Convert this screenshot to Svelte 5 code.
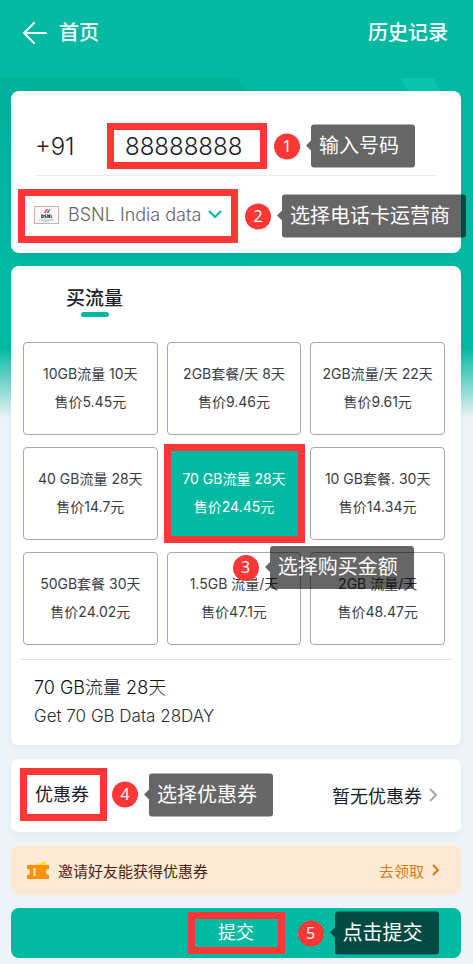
<script lang="ts">
	interface Plan {
		name: string;
		price: string;
		detail: string;
	}

	const plans: Plan[] = [
		{ name: '10GB流量 10天', price: '5.45', detail: 'Get 10 GB Data 10DAY' },
		{ name: '2GB套餐/天 8天', price: '9.46', detail: 'Get 2 GB/Day 8DAY' },
		{ name: '2GB流量/天 22天', price: '9.61', detail: 'Get 2 GB/Day 22DAY' },
		{ name: '40 GB流量 28天', price: '14.7', detail: 'Get 40 GB Data 28DAY' },
		{ name: '70 GB流量 28天', price: '24.45', detail: 'Get 70 GB Data 28DAY' },
		{ name: '10 GB套餐. 30天', price: '14.34', detail: 'Get 10 GB Data 30DAY' },
		{ name: '50GB套餐 30天', price: '24.02', detail: 'Get 50 GB Data 30DAY' },
		{ name: '1.5GB 流量/天', price: '47.1', detail: 'Get 1.5 GB/Day' },
		{ name: '2GB 流量/天', price: '48.47', detail: 'Get 2 GB/Day' }
	];

	let phone = $state('88888888');
	let operator = $state('bsnl');
	let selected = $state(4);
	let plan = $derived(plans[selected]);
</script>

{#snippet step(n: number, text: string)}
	<span class="step step-{n}">
		<span class="badge">{n}</span>
		<span class="tip">{text}</span>
	</span>
{/snippet}

<div class="page">
	<header>
		<a href="#home" class="back">
			<svg width="24" height="22" viewBox="0 0 24 22" fill="none" stroke="currentColor" stroke-width="2" stroke-linecap="round" stroke-linejoin="round" aria-hidden="true">
				<path d="M11 1 1 11l10 10M1 11h22" />
			</svg>
			首页
		</a>
		<a href="#history">历史记录</a>
	</header>

	<main>
		<section class="card">
			<div class="phone-row">
				<label for="phone">+91</label>
				<div class="marked phone-field">
					<input id="phone" type="tel" bind:value={phone} />
					{@render step(1, '输入号码')}
				</div>
			</div>
			<div class="operator-row">
				<div class="marked operator-field">
					<svg class="logo" width="25" height="18" viewBox="0 0 25 18" aria-hidden="true">
						<rect x="0.5" y="0.5" width="24" height="17" fill="#fdfafa" stroke="#dcaaa8" />
						<path d="M9.500 7l3-4h2l-3 4z" fill="#e0574c" />
						<path d="M12.500 7l3-4h1l-2 4z" fill="#39798a" />
						<path d="M7.700 8.500v3.500M7.700 9h1.600v2.600H7.700M12.300 9h-1.500v1.300h1.400v1.400h-1.500M13.800 12V8.500l1.700 3.500V8.500M17 8.500v3.200h1.300" fill="none" stroke="#252535" stroke-width="0.900" />
						<path d="M5 14h15" stroke="#83c9c5" stroke-width="1" />
						<path d="M9 15.500h6" stroke="#c9d6dc" stroke-width="1" />
					</svg>
					<select aria-label="运营商" bind:value={operator}>
						<option value="bsnl">BSNL India data</option>
					</select>
					<svg class="caret" width="14" height="9" viewBox="0 0 14 9" fill="none" stroke="#02b9a2" stroke-width="2" aria-hidden="true">
						<path d="M1 1l6 6 6-6" />
					</svg>
					{@render step(2, '选择电话卡运营商')}
				</div>
			</div>
		</section>

		<section class="card">
			<h2>买流量</h2>
			<div class="plans">
				{#each plans as p, i}
					<div class="plan-cell" class:marked={i === 4}>
						<button type="button" class="plan" class:active={selected === i} aria-pressed={selected === i} onclick={() => (selected = i)}>
							<span>{p.name}</span>
							<span>售价{p.price}元</span>
						</button>
						{#if i === 4}
							{@render step(3, '选择购买金额')}
						{/if}
					</div>
				{/each}
			</div>
			<div class="detail">
				<h3>{plan.name}</h3>
				<p>{plan.detail}</p>
			</div>
		</section>

		<section class="card coupon">
			<div class="marked coupon-label">
				优惠券
				{@render step(4, '选择优惠券')}
			</div>
			<button type="button" class="coupon-value">
				暂无优惠券
				<svg width="8" height="14" viewBox="0 0 8 14" fill="none" stroke="#a3a8b5" stroke-width="2" aria-hidden="true">
					<path d="M1 1l6 6-6 6" />
				</svg>
			</button>
		</section>

		<a href="#invite" class="promo">
			<svg width="22" height="19" viewBox="0 0 22 19" aria-hidden="true">
				<path d="M4 5 18 0l2 5v4H4z" fill="#ffdf35" />
				<path d="M0 4h22v4a3 3 0 0 0 0 6v4H0v-4a3 3 0 0 0 0-6z" fill="#ff9208" />
				<path d="M7.500 7v8" stroke="#ffebc8" stroke-width="2" />
			</svg>
			<span>邀请好友能获得优惠券</span>
			<span class="claim">
				去领取
				<svg width="8" height="12" viewBox="0 0 8 12" fill="none" stroke="currentColor" stroke-width="2" aria-hidden="true">
					<path d="M1 1l5 5-5 5" />
				</svg>
			</span>
		</a>

		<button type="button" class="submit">
			<span class="marked submit-label">
				提交
				{@render step(5, '点击提交')}
			</span>
		</button>
	</main>
</div>

<style>
	:global(body) {
		margin: 0;
		background: #eef3f7;
	}

	.page {
		--green: #02b9a2;
		--red: #fd3636;
		--ink: #1c1e2b;
		position: relative;
		z-index: 0;
		min-height: 100vh;
		box-sizing: border-box;
		padding: 0 12px 6px 11px;
		background: linear-gradient(#02b9a2 348px, #eef3f7 418px);
		color: var(--ink);
		font-family: Inter, 'Noto Sans CJK SC', sans-serif;
	}

	/* faint shapes behind the first card */
	.page::before,
	.page::after {
		content: '';
		position: absolute;
		z-index: -1;
		top: 78px;
	}

	.page::before {
		left: 0;
		width: 252px;
		height: 200px;
		background: linear-gradient(rgba(0, 60, 50, 0.06), transparent);
		clip-path: polygon(0 0, 94% 0, 100% 10%, 100% 100%, 0 100%);
	}

	.page::after {
		right: 24px;
		width: 48px;
		height: 30px;
		background: rgba(20, 220, 190, 0.35);
		clip-path: polygon(0 0, 68% 0, 100% 100%, 32% 100%);
	}

	button,
	input,
	select {
		margin: 0;
		padding: 0;
		border: none;
		background: none;
		color: inherit;
		font: inherit;
	}

	button {
		cursor: pointer;
	}

	svg {
		display: block;
		flex: none;
	}

	header {
		display: flex;
		justify-content: space-between;
		padding: 13px 13px 38px 12px;
		font-size: 20px;
		font-weight: 500;
		line-height: 40px;
	}

	header a {
		color: white;
		text-decoration: none;
	}

	.back {
		display: flex;
		align-items: center;
		gap: 12px;
	}

	.card {
		margin-bottom: 13px;
		border-radius: 8px;
		background: white;
		box-shadow: 0 3px 8px rgba(40, 60, 90, 0.05);
	}

	/* highlighted areas of the walkthrough */
	.marked {
		position: relative;
	}

	.marked::after {
		content: '';
		position: absolute;
		inset: 0;
		border: 7px solid var(--red);
		pointer-events: none;
	}

	.step {
		position: absolute;
		z-index: 2;
		top: 50%;
		left: 100%;
		display: flex;
		align-items: center;
		gap: 11px;
		margin-left: 7px;
		transform: translateY(-50%);
		color: white;
		font-weight: 400;
		white-space: nowrap;
		pointer-events: none;
	}

	.badge {
		width: 26px;
		height: 26px;
		border-radius: 50%;
		background: var(--red);
		font-family: 'Noto Sans', sans-serif;
		font-size: 16px;
		line-height: 24px;
		text-align: center;
	}

	.tip {
		position: relative;
		padding: 0 16px 0 8px;
		border-radius: 3px;
		background: rgba(0, 0, 0, 0.6);
		font-size: 20px;
		line-height: 43px;
	}

	.tip::before {
		content: '';
		position: absolute;
		top: 16px;
		right: 100%;
		border: 5px solid transparent;
		border-left-width: 0;
		border-right-color: rgba(0, 0, 0, 0.6);
	}

	.step-3 {
		top: 100%;
		left: 66px;
		margin: 6px 0 0;
		transform: none;
	}

	.step-4 {
		margin-left: 5px;
	}

	.step-5 {
		margin-left: 13px;
	}

	.phone-row {
		display: flex;
		align-items: center;
		margin: 0 24px;
		padding: 32px 0 6px;
		border-bottom: 1px solid #ececef;
		font-size: 24px;
		font-weight: 300;
	}

	.phone-row label {
		width: 72px;
	}

	.phone-field {
		width: 160px;
		height: 46px;
	}

	.phone-field input {
		width: 100%;
		height: 100%;
		box-sizing: border-box;
		padding-left: 18px;
		outline: none;
	}

	.operator-row {
		padding: 13px 7px 10px;
	}

	.operator-field {
		display: flex;
		align-items: center;
		width: 220px;
		height: 54px;
		box-sizing: border-box;
		padding: 0 16px 3px;
	}

	.operator-field select {
		flex: 1;
		height: 36px;
		padding-left: 9px;
		appearance: none;
		outline: none;
		color: #62646c;
		font-size: 18px;
		font-weight: 300;
	}

	.caret {
		margin-left: -14px;
		pointer-events: none;
	}

	h2,
	h3,
	p {
		margin: 0;
	}

	h2 {
		width: max-content;
		padding: 20px 0 0 55px;
		font-size: 19px;
		font-weight: 500;
		line-height: 26px;
	}

	h2::after {
		content: '';
		display: block;
		width: 28px;
		height: 5px;
		margin: 0 auto;
		border-radius: 3px;
		background: var(--green);
	}

	.plans {
		display: grid;
		grid-template-columns: repeat(3, 1fr);
		gap: 12px 9px;
		margin: 25px 16px 14px 12px;
	}

	.plan-cell.marked::after {
		inset: -3px -4px -3px -3px;
	}

	.plan {
		display: flex;
		flex-direction: column;
		justify-content: center;
		align-items: center;
		width: 100%;
		height: 93px;
		padding-bottom: 2px;
		border: 1px solid #a3a8b5;
		border-radius: 4px;
		color: #3a3c46;
		font-size: 14px;
		line-height: 28px;
		white-space: nowrap;
	}

	.plan.active {
		border-color: var(--green);
		background: var(--green);
		color: white;
	}

	.detail {
		margin: 0 8px;
		padding: 14px 15px 15px;
		border-top: 1px solid #e2e3e6;
		font-weight: 300;
		line-height: 28px;
	}

	h3 {
		color: #0c0e1b;
		font-size: 18px;
		font-weight: 300;
	}

	p {
		color: #2b2d37;
		font-size: 17px;
	}

	.coupon {
		display: flex;
		justify-content: space-between;
		align-items: center;
		margin-top: 14px;
		padding: 9px 24px 11px 9px;
		font-size: 18px;
	}

	.coupon-label {
		width: 87px;
		line-height: 53px;
		text-indent: 15px;
	}

	.coupon-label .step {
		text-indent: 0;
	}

	.coupon-value {
		display: flex;
		align-items: center;
		gap: 7px;
	}

	.promo {
		display: flex;
		align-items: center;
		gap: 9px;
		height: 50px;
		margin-bottom: 13px;
		padding: 0 21px 0 16px;
		border-radius: 8px;
		background: #fce9d6;
		color: #4b1f0f;
		font-size: 15px;
		text-decoration: none;
	}

	.claim {
		display: flex;
		align-items: center;
		gap: 8px;
		margin-left: auto;
		color: #df7710;
	}

	.submit {
		display: flex;
		justify-content: center;
		align-items: center;
		width: 100%;
		height: 50px;
		border-radius: 8px;
		background: var(--green);
		color: white;
		font-size: 18px;
	}

	.submit-label {
		width: 97px;
		line-height: 42px;
	}
</style>
